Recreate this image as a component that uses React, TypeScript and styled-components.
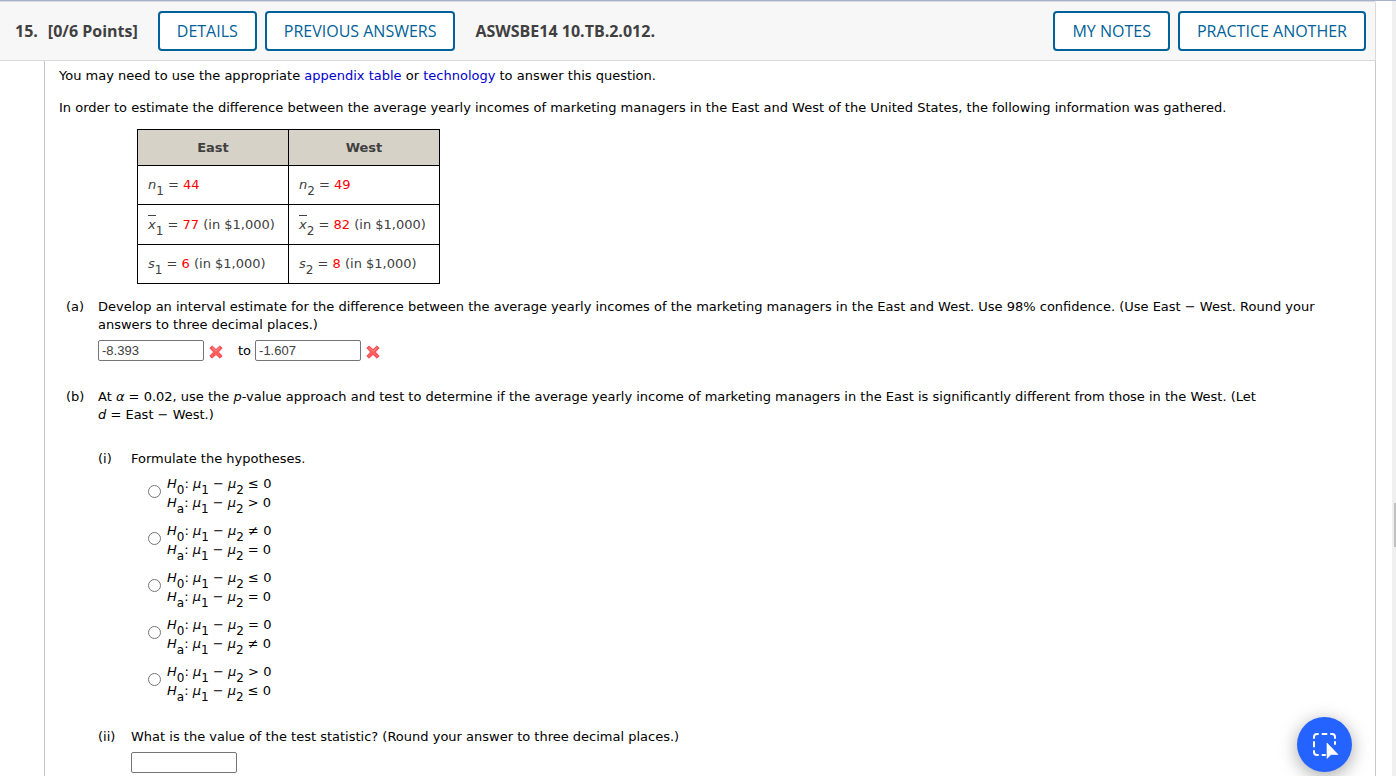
import React from "react";
import styled, { createGlobalStyle } from "styled-components";

const GlobalStyle = createGlobalStyle`
  *, *::before, *::after { box-sizing: border-box; }
  body {
    margin: 0;
    background: #fff;
    color: #000;
    font: 13px/18px Verdana, "DejaVu Sans", sans-serif;
  }
`;

const Page = styled.div`
  display: flex;
  min-height: 100vh;
  border-top: 1px solid #a6b0cf;
`;

const Question = styled.article`
  flex: 1;
  min-width: 0;
  margin-right: 16px;
  display: flex;
  flex-direction: column;
`;

const Header = styled.header`
  display: flex;
  align-items: center;
  gap: 8px;
  height: 60px;
  padding: 0 9px 0 15px;
  background: #f7f7f7;
  border: 1px solid #d9d9d9;
  border-left: 0;
  border-radius: 0 2px 0 0;
  color: #404040;
  font: 600 16px/24px "Open Sans", sans-serif;
`;

const Heading = styled.h1`
  display: flex;
  gap: 10px;
  margin: 0 12px 0 0;
  font: inherit;
  font-weight: 700;
  white-space: nowrap;
`;

const QuestionCode = styled.span`
  flex: 1;
  margin-left: 12px;
  font-weight: 700;
  white-space: nowrap;
`;

const OutlineButton = styled.button`
  height: 40px;
  padding: 0 17px;
  background: #fff;
  border: 2px solid #006298;
  border-radius: 4px;
  color: #006298;
  font: 500 16px/24px "Open Sans", sans-serif;
  white-space: nowrap;
  cursor: pointer;
`;

const Body = styled.main`
  flex: 1;
  margin-left: 44px;
  padding: 6px 14px 2px;
  border: 1px solid #c8c8c8;
  border-width: 0 1px;
`;

const Paragraph = styled.p`
  margin: 0;

  & + & {
    margin-top: 14px;
  }
`;

const Link = styled.a`
  color: #0000cc;
  text-decoration: none;
`;

const DataTable = styled.table`
  margin: 12px 0 14px 78px;
  border-collapse: collapse;
  color: #404040;

  th, td {
    height: 39px;
    min-width: 151px;
    padding: 0 10px;
    border: 1px solid #000;
    text-align: left;
    white-space: nowrap;
  }
  th {
    height: 36px;
    padding-top: 1px;
    background: #d6d2c7;
    text-align: center;
  }
`;

const MeanRow = styled.tr`
  && td {
    height: 40px;
  }
`;

const Given = styled.span`
  color: #ff0000;
`;

const Subscript = styled.sub`
  font-size: 12px;
  line-height: 0;
  vertical-align: -6px;
`;

const Mean = styled.i`
  display: inline-block;
  border-top: 1px solid currentColor;
  line-height: 18px;
`;

const Phrase = styled.span`
  white-space: nowrap;
`;

const Part = styled.section<{ $labelWidth: number; $indent?: number; $after: number }>`
  display: grid;
  grid-template-columns: ${(p) => p.$labelWidth}px minmax(0, 1fr);
  margin: 0 0 ${(p) => p.$after}px ${(p) => p.$indent ?? 0}px;
`;

const AnswerRow = styled.div`
  display: flex;
  align-items: center;
  margin-top: 6px;
`;

const AnswerInput = styled.input`
  width: 106px;
  height: 21px;
  padding: 1px 3px;
  border: 1px solid #767676;
  border-radius: 2px;
  background: #fff;
  color: #404040;
  font: 13px/17px "Liberation Sans", Arial, sans-serif;
`;

const WrongMark = styled.svg`
  width: 14px;
  height: 14px;
  margin: 3px 15px 0 5px;
`;

const RangeWord = styled.span`
  margin-right: 4px;
`;

const Choices = styled.fieldset`
  display: grid;
  gap: 9px;
  margin: 6px 0 0 17px;
  padding: 0;
  border: 0;
`;

const Choice = styled.label`
  display: flex;
  align-items: center;
  gap: 6px;
  line-height: 19px;
`;

const Radio = styled.input`
  width: 13px;
  height: 13px;
  margin: 0 0 4px;
`;

const CaptureButton = styled.button`
  position: fixed;
  right: 44px;
  bottom: 4px;
  display: grid;
  place-items: center;
  width: 55px;
  height: 55px;
  padding: 0;
  border: 0;
  border-radius: 50%;
  background: #2463ff;
  box-shadow: 0 4px 18px rgba(0, 0, 0, 0.35);
  cursor: pointer;
`;

const ScrollTrack = styled.div`
  display: grid;
  grid-template-rows: 502fr 44fr 229fr;
  width: 4px;
  padding-left: 2px;
  background: #f0f0f0;
`;

const ScrollThumb = styled.div`
  grid-row: 2;
  background: #c1c1c1;
`;

function Var({ name, sub }: { name: string; sub: string }) {
  return (
    <>
      <i>{name}</i>
      <Subscript>{sub}</Subscript>
    </>
  );
}

function Hypothesis({ kind, relation }: { kind: string; relation: string }) {
  return (
    <div>
      <Var name="H" sub={kind} />: <Var name="μ" sub="1" /> − <Var name="μ" sub="2" /> {relation} 0
    </div>
  );
}

function Incorrect() {
  return (
    <WrongMark viewBox="0 0 14 14" role="img" aria-label="Incorrect">
      <path
        d="M3.2 1 L7 4.6 L10.8 1 L13.2 3 L9.4 7 L13.2 11 L11 13.2 L7 9.5 L3 13.2 L0.8 11 L4.6 7 L0.8 3 Z"
        fill="#ff5c5c"
        stroke="#e8383d"
        strokeWidth="0.8"
        strokeLinejoin="round"
      />
      <path d="M3.2 2.6 L7 6.2 L10.8 2.6" fill="none" stroke="#ff8a8a" strokeWidth="1" />
    </WrongMark>
  );
}

const columns = [
  { sub: "1", n: "44", mean: "77", s: "6" },
  { sub: "2", n: "49", mean: "82", s: "8" },
];

const choices = [
  ["≤", ">"],
  ["≠", "="],
  ["≤", "="],
  ["=", "≠"],
  [">", "≤"],
];

export default function App() {
  return (
    <>
      <GlobalStyle />
      <Page>
        <Question>
          <Header>
            <Heading>
              <span>15.</span>
              <span>[0/6 Points]</span>
            </Heading>
            <OutlineButton type="button">DETAILS</OutlineButton>
            <OutlineButton type="button">PREVIOUS ANSWERS</OutlineButton>
            <QuestionCode>ASWSBE14 10.TB.2.012.</QuestionCode>
            <OutlineButton type="button">MY NOTES</OutlineButton>
            <OutlineButton type="button">PRACTICE ANOTHER</OutlineButton>
          </Header>
          <Body>
            <Paragraph>
              You may need to use the appropriate <Link href="#appendix">appendix table</Link> or{" "}
              <Link href="#technology">technology</Link> to answer this question.
            </Paragraph>
            <Paragraph>
              In order to estimate the difference between the average yearly incomes of marketing managers in the East
              and West of the United States, the following information was gathered.
            </Paragraph>
            <DataTable>
              <thead>
                <tr>
                  <th scope="col">East</th>
                  <th scope="col">West</th>
                </tr>
              </thead>
              <tbody>
                <tr>
                  {columns.map((c) => (
                    <td key={c.sub}>
                      <Var name="n" sub={c.sub} /> = <Given>{c.n}</Given>
                    </td>
                  ))}
                </tr>
                <MeanRow>
                  {columns.map((c) => (
                    <td key={c.sub}>
                      <Mean>x</Mean>
                      <Subscript>{c.sub}</Subscript> = <Given>{c.mean}</Given> (in $1,000)
                    </td>
                  ))}
                </MeanRow>
                <tr>
                  {columns.map((c) => (
                    <td key={c.sub}>
                      <Var name="s" sub={c.sub} /> = <Given>{c.s}</Given> (in $1,000)
                    </td>
                  ))}
                </tr>
              </tbody>
            </DataTable>
            <Part $labelWidth={32} $indent={7} $after={27}>
              <span>(a)</span>
              <div>
                Develop an interval estimate for the difference between the average yearly incomes of the marketing
                managers in the East and West. Use 98% confidence. (Use East − West. Round your answers to three decimal
                places.)
                <AnswerRow>
                  <AnswerInput aria-label="Lower limit" defaultValue="-8.393" />
                  <Incorrect />
                  <RangeWord>to</RangeWord>
                  <AnswerInput aria-label="Upper limit" defaultValue="-1.607" />
                  <Incorrect />
                </AnswerRow>
              </div>
            </Part>
            <Part $labelWidth={32} $indent={7} $after={26}>
              <span>(b)</span>
              <div>
                At <i>α</i> = 0.02, use the <i>p</i>-value approach and test to determine if the average yearly income
                of marketing managers in the East is significantly different from those in the West. (Let{" "}
                <Phrase>
                  <i>d</i> = East − West.)
                </Phrase>
              </div>
            </Part>
            <Part $labelWidth={33} $indent={39} $after={28}>
              <span>(i)</span>
              <div>
                Formulate the hypotheses.
                <Choices aria-label="Hypotheses">
                  {choices.map(([nullRelation, altRelation], index) => (
                    <Choice key={index}>
                      <Radio type="radio" name="hypotheses" value={index} />
                      <span>
                        <Hypothesis kind="0" relation={nullRelation} />
                        <Hypothesis kind="a" relation={altRelation} />
                      </span>
                    </Choice>
                  ))}
                </Choices>
              </div>
            </Part>
            <Part $labelWidth={33} $indent={39} $after={0}>
              <span>(ii)</span>
              <div>
                <label htmlFor="statistic">
                  What is the value of the test statistic? (Round your answer to three decimal places.)
                </label>
                <AnswerRow>
                  <AnswerInput id="statistic" />
                </AnswerRow>
              </div>
            </Part>
          </Body>
        </Question>
        <ScrollTrack aria-hidden="true">
          <ScrollThumb />
        </ScrollTrack>
      </Page>
      <CaptureButton type="button" aria-label="Select area">
        <svg width="29" height="29" viewBox="0 0 29 29" fill="none" aria-hidden="true">
          <path
            d="M4 8V7A3 3 0 0 1 7 4H8M12.500 4H16.500M21 4H22A3 3 0 0 1 25 7V8M25 12V14M4 12V16.500M4 21V22A3 3 0 0 0 7 25H8M12.500 25H15"
            stroke="#fff"
            strokeWidth="2"
            strokeLinecap="round"
          />
          <path d="M17 13V28.500L21 24.500H28Z" fill="#fff" stroke="#fff" strokeWidth="0.600" strokeLinejoin="round" />
        </svg>
      </CaptureButton>
    </>
  );
}
